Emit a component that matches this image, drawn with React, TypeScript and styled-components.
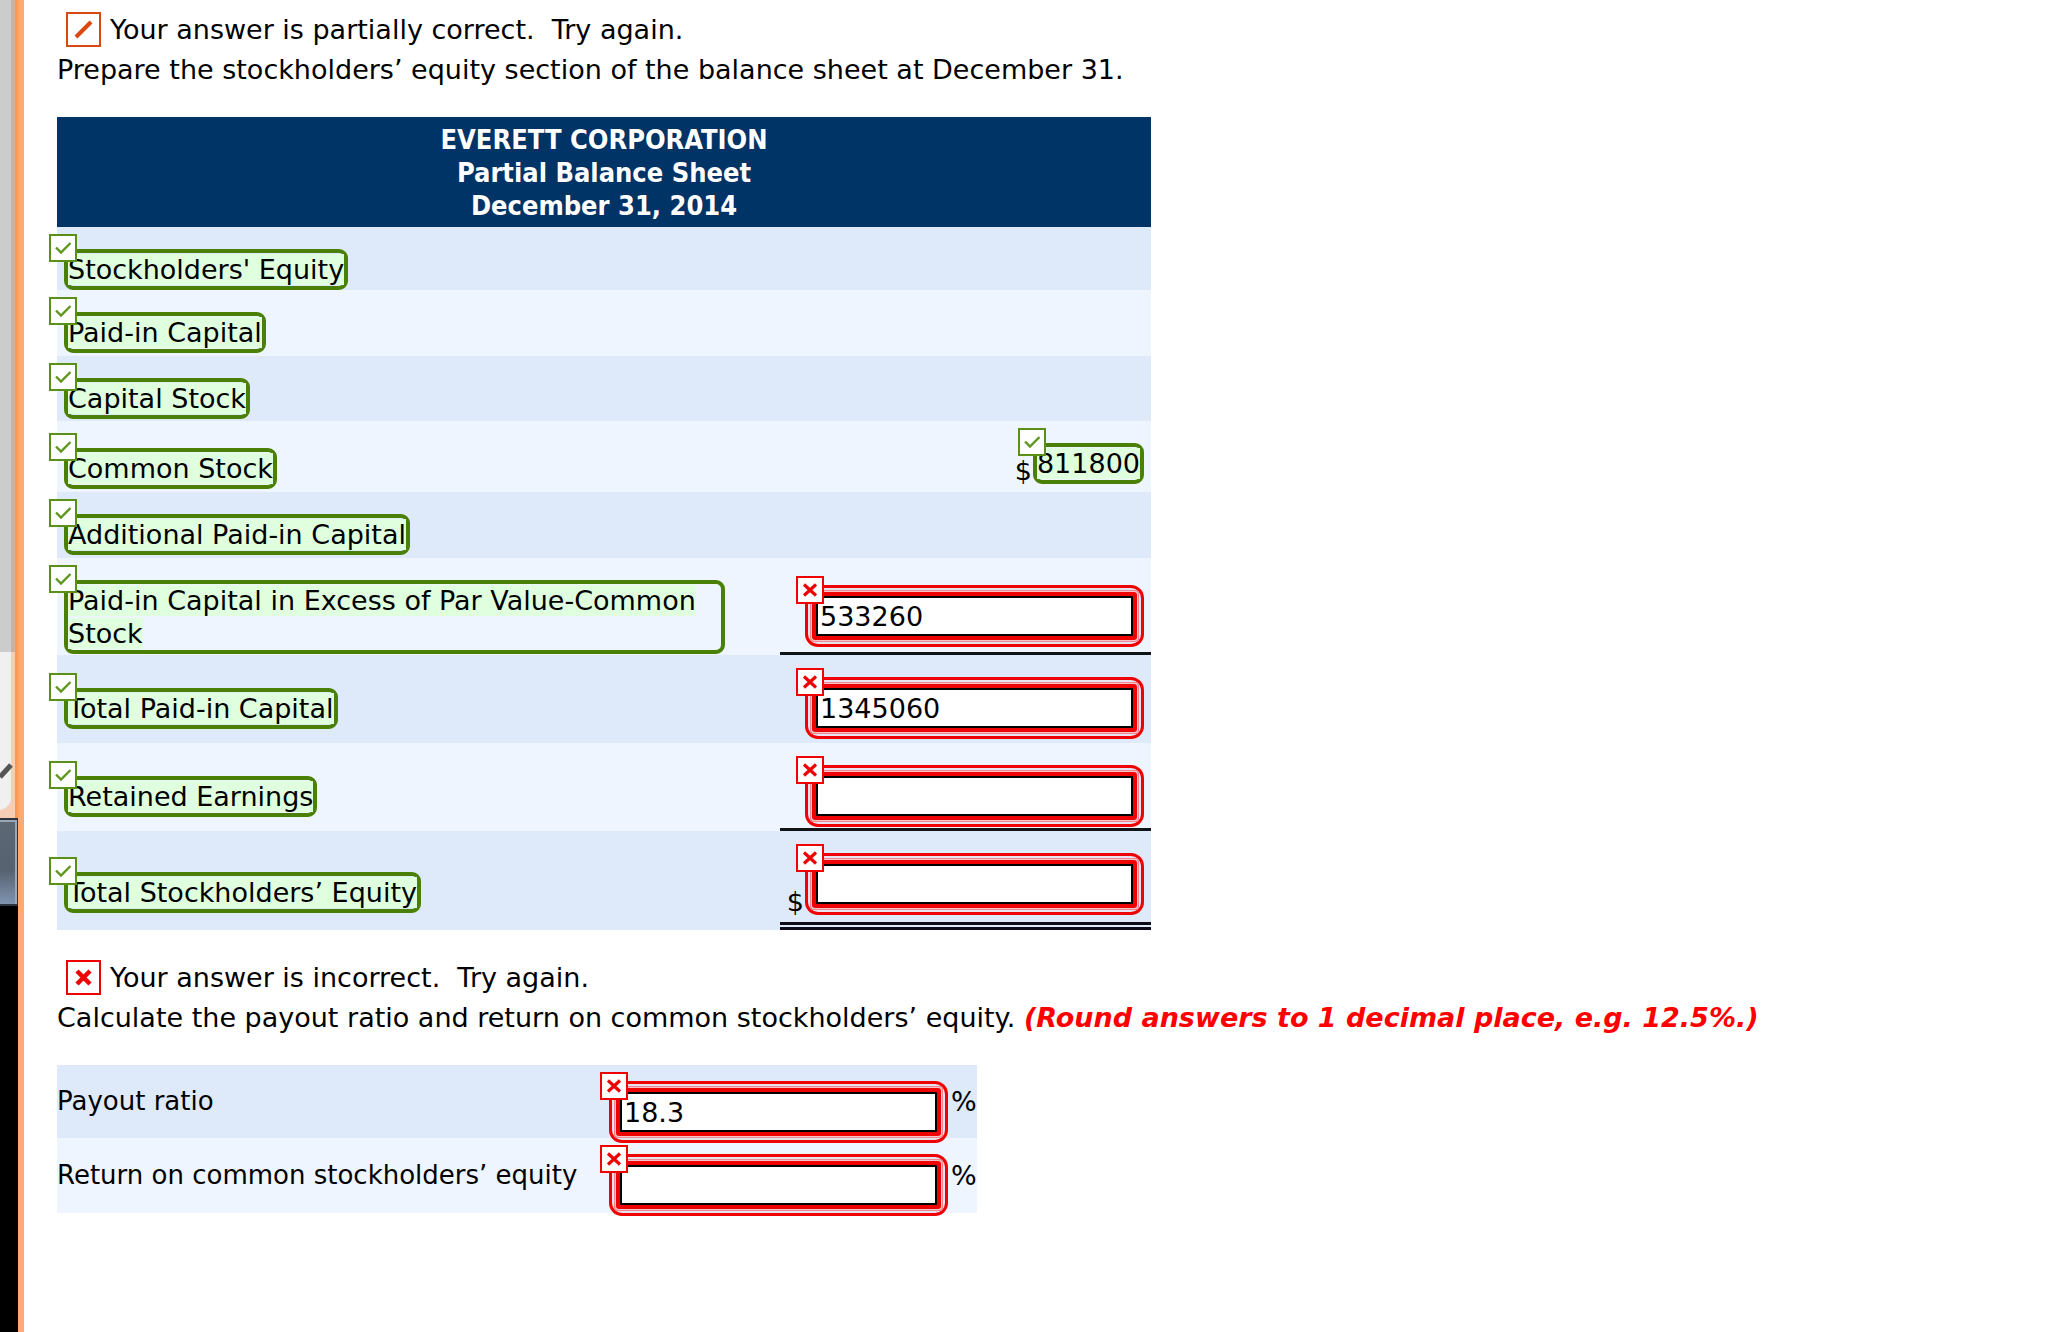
import React, { useState } from 'react';
import styled, { createGlobalStyle, css } from 'styled-components';

const GlobalStyle = createGlobalStyle`
  body {
    margin: 0;
    background: #fff;
    color: #000;
    font-family: Verdana, "DejaVu Sans", sans-serif;
    font-size: 27px;
    line-height: 33px;
  }
  *, *::before, *::after { box-sizing: border-box; }
`;

const GREEN = '#4a8005';
const RED = '#ee0202';

const Page = styled.div`
  display: flex;
  min-height: 100vh;
`;

const Rail = styled.div`
  display: flex;
  flex: none;
  flex-direction: column;
  width: 18px;
`;

const RailTrack = styled.div`
  height: 652px;
  background: linear-gradient(to right, #ccc 0 11px, #c8b2a4 11px 15px, #ff9850 15px);
`;

const RailPanel = styled.div`
  height: 166px;
  background: linear-gradient(to right, #f7ceb4 0 15px, #ff9850 15px);
`;

const RailArt = styled.svg`
  display: block;
`;

const RailButton = styled.div`
  height: 88px;
  border: solid #2b3440;
  border-width: 2px 1px 2px 0;
  background: linear-gradient(#5c6874, #566270 60%, #8094b0);
  box-shadow: inset -2px 0 0 #9aa6b4, inset 0 2px 0 #9aa6b4;
`;

const RailEnd = styled.div`
  flex: 1;
  background: #000;
`;

const RailEdge = styled.div`
  flex: none;
  width: 6px;
  background: #ffaa70;
`;

const Main = styled.main`
  flex: 1;
  padding: 9px 33px 0;
`;

const Feedback = styled.div`
  display: flex;
  align-items: center;
  gap: 9px;
  height: 40px;
  padding-left: 9px;
  white-space: pre;
`;

const Prompt = styled.p`
  margin: 4px 0 31px;
`;

const Hint = styled.em`
  color: #f00;
  font-weight: bold;
`;

const Sheet = styled.table`
  width: 1094px;
  margin-bottom: 27px;
  border-spacing: 0;
  table-layout: fixed;
`;

const Title = styled.th`
  height: 110px;
  padding: 0;
  background: #036;
  color: #fff;
  font-family: "DejaVu Sans Condensed", "DejaVu Sans", sans-serif;
`;

const Row = styled.tr<{ $height: number }>`
  height: ${p => p.$height}px;
  background: #eef5ff;
  &:nth-child(odd) { background: #dee9f9; }
`;

const Label = styled.th<{ $top: number }>`
  padding: ${p => p.$top}px 0 0 7px;
  font-weight: normal;
  text-align: left;
  vertical-align: top;
`;

const Amount = styled.td<{ $top: number; $rule?: 'single' | 'double' }>`
  padding: ${p => p.$top}px 7px 0 0;
  vertical-align: top;
  ${p => p.$rule === 'single' && css`border-bottom: 3px solid #101418;`}
  ${p => p.$rule === 'double' && css`border-bottom: 8px double #0c0c18;`}
`;

const Money = styled.div`
  display: flex;
  align-items: flex-end;
  justify-content: flex-end;
  gap: 1px;
`;

const Currency = styled.span`
  margin-bottom: -3px;
`;

const Chip = styled.span`
  position: relative;
  display: inline-block;
  max-width: 661px;
  border: 4px solid ${GREEN};
  border-radius: 9px;
  vertical-align: top;
`;

const ChipText = styled.span`
  background: #dfffdf;
`;

const Badge = styled.svg<{ $offset: number }>`
  position: absolute;
  top: ${p => p.$offset}px;
  left: ${p => p.$offset}px;
  width: 28px;
  height: 28px;
`;

const Frame = styled.div<{ $overhang?: boolean }>`
  position: relative;
  width: 339px;
  padding: 8px;
  border: 3px solid ${RED};
  border-radius: 13px;
  background: #e6e2ef;
  ${p => p.$overhang && css`margin-bottom: -5px;`}
`;

const Entry = styled.input`
  display: block;
  width: 100%;
  height: 40px;
  padding: 0 2px;
  border: 2px solid #000;
  border-radius: 1px;
  outline: none;
  background: #fff;
  color: #000;
  box-shadow: 0 0 0 4px ${RED}, 0 0 0 5px #f3c4cc, 0 0 0 6px #ee8890;
  font: inherit;
`;

const Ratios = styled.table`
  width: 920px;
  border-spacing: 0;
`;

const RatioLabel = styled.th`
  padding: 0;
  font-size: 26px;
  font-weight: normal;
  text-align: left;
`;

const RatioField = styled.td`
  width: 342px;
  padding: 16px 0 0;
  vertical-align: top;
`;

const Unit = styled.td`
  width: 26px;
  padding: 0;
`;

function Tick({ offset }: { offset: number }) {
  return (
    <Badge $offset={offset} viewBox="0 0 28 28" aria-hidden>
      <rect x="1" y="1" width="26" height="26" fill="#fff" stroke="#5a9016" strokeWidth="2" />
      <path d="M7 13.5l5 5L21.500 9" fill="none" stroke="#5f961d" strokeWidth="2.400" />
    </Badge>
  );
}

function Cross({ offset }: { offset: number }) {
  return (
    <Badge $offset={offset} viewBox="0 0 28 28" aria-hidden>
      <rect x="1" y="1" width="26" height="26" fill="#fff" stroke={RED} strokeWidth="2" />
      <path d="M8 8.500l12 11M20 8.500l-12 11" fill="none" stroke={RED} strokeWidth="3.200" />
    </Badge>
  );
}

function Correct({ children }: { children: string }) {
  return (
    <Chip>
      <ChipText>{children}</ChipText>
      <Tick offset={-19} />
    </Chip>
  );
}

function Wrong({ initial, label, id, overhang }: { initial: string; label?: string; id?: string; overhang?: boolean }) {
  const [value, setValue] = useState(initial);
  return (
    <Frame $overhang={overhang}>
      <Entry id={id} aria-label={label} value={value} onChange={e => setValue(e.target.value)} />
      <Cross offset={-12} />
    </Frame>
  );
}

type Line = {
  label: string;
  height: number;
  top?: number;
  amountTop?: number;
  fixed?: string;
  entry?: string;
  dollar?: boolean;
  rule?: 'single' | 'double';
};

const lines: Line[] = [
  { label: "Stockholders' Equity", height: 63 },
  { label: 'Paid-in Capital', height: 66 },
  { label: 'Capital Stock', height: 65 },
  { label: 'Common Stock', height: 71, top: 27, fixed: '811800', dollar: true },
  { label: 'Additional Paid-in Capital', height: 66 },
  { label: 'Paid-in Capital in Excess of Par Value-Common Stock', height: 97, amountTop: 27, entry: '533260', rule: 'single' },
  { label: 'Total Paid-in Capital', height: 88, top: 33, entry: '1345060' },
  { label: 'Retained Earnings', height: 88, top: 33, entry: '', rule: 'single' },
  { label: 'Total Stockholders’ Equity', height: 99, top: 41, entry: '', dollar: true, rule: 'double' },
];

export default function App() {
  return (
    <Page>
      <GlobalStyle />
      <Rail>
        <RailTrack />
        <RailPanel>
          <RailArt width="15" height="166" viewBox="0 0 15 166" aria-hidden>
            <path d="M0 0h11v148q-2 8-11 10z" fill="#f0f0f0" />
            <path d="M0 125l11-12" stroke="#555" strokeWidth="5" />
          </RailArt>
        </RailPanel>
        <RailButton />
        <RailEnd />
      </Rail>
      <RailEdge />
      <Main>
        <Feedback>
          <svg width="35" height="35" viewBox="0 0 35 35" aria-hidden>
            <rect x="1" y="1" width="33" height="33" fill="#fff" stroke="#d9480f" strokeWidth="2" />
            <path d="M10 25L25 10" stroke="#d9480f" strokeWidth="4" />
          </svg>
          {'Your answer is partially correct.  Try again.'}
        </Feedback>
        <Prompt>Prepare the stockholders’ equity section of the balance sheet at December 31.</Prompt>
        <Sheet>
          <colgroup>
            <col />
            <col style={{ width: 371 }} />
          </colgroup>
          <thead>
            <tr>
              <Title colSpan={2}>
                EVERETT CORPORATION
                <br />
                Partial Balance Sheet
                <br />
                December 31, 2014
              </Title>
            </tr>
          </thead>
          <tbody>
            {lines.map(line => (
              <Row key={line.label} $height={line.height}>
                <Label scope="row" $top={line.top ?? 22}>
                  <Correct>{line.label}</Correct>
                </Label>
                <Amount $top={line.amountTop ?? 22} $rule={line.rule}>
                  <Money>
                    {line.dollar && <Currency>$</Currency>}
                    {line.fixed && <Correct>{line.fixed}</Correct>}
                    {line.entry !== undefined && <Wrong initial={line.entry} label={line.label} />}
                  </Money>
                </Amount>
              </Row>
            ))}
          </tbody>
        </Sheet>
        <Feedback>
          <svg width="35" height="35" viewBox="0 0 35 35" aria-hidden>
            <rect x="1" y="1" width="33" height="33" fill="#fff" stroke={RED} strokeWidth="2" />
            <path d="M11 11l13 13M24 11L11 24" stroke={RED} strokeWidth="4.500" />
          </svg>
          {'Your answer is incorrect.  Try again.'}
        </Feedback>
        <Prompt>
          Calculate the payout ratio and return on common stockholders’ equity.{' '}
          <Hint>(Round answers to 1 decimal place, e.g. 12.5%.)</Hint>
        </Prompt>
        <Ratios>
          <tbody>
            <Row $height={73}>
              <RatioLabel scope="row"><label htmlFor="payout">Payout ratio</label></RatioLabel>
              <RatioField><Wrong id="payout" initial="18.3" overhang /></RatioField>
              <Unit>%</Unit>
            </Row>
            <Row $height={75}>
              <RatioLabel scope="row"><label htmlFor="return">Return on common stockholders’ equity</label></RatioLabel>
              <RatioField><Wrong id="return" initial="" overhang /></RatioField>
              <Unit>%</Unit>
            </Row>
          </tbody>
        </Ratios>
      </Main>
    </Page>
  );
}
